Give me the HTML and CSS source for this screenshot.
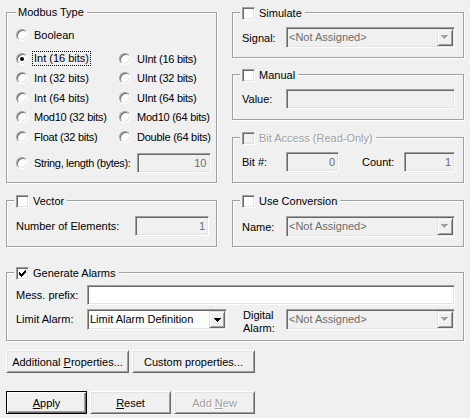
FILE: index.html
```html
<!DOCTYPE html>
<html>
<head>
<meta charset="utf-8">
<link rel="stylesheet" href="styles.css">
</head>
<body>
<div class="dlg">
  <div class="top">
    <div class="group modbus">
      <div class="legend"><span>Modbus Type</span></div>
      <div class="opts">
        <label class="opt h20 first"><span class="radio"></span><span>Boolean</span></label>
        <div class="pair h19">
          <label class="opt"><span class="radio on"></span><span class="focus">Int (16 bits)</span></label>
          <label class="opt"><span class="radio"></span><span class="nar">UInt (16 bits)</span></label>
        </div>
        <div class="pair h20">
          <label class="opt"><span class="radio"></span><span>Int (32 bits)</span></label>
          <label class="opt"><span class="radio"></span><span class="nar">UInt (32 bits)</span></label>
        </div>
        <div class="pair h19">
          <label class="opt"><span class="radio"></span><span>Int (64 bits)</span></label>
          <label class="opt"><span class="radio"></span><span class="nar">UInt (64 bits)</span></label>
        </div>
        <div class="pair h20">
          <label class="opt"><span class="radio"></span><span class="nar">Mod10 (32 bits)</span></label>
          <label class="opt"><span class="radio"></span><span class="nar">Mod10 (64 bits)</span></label>
        </div>
        <div class="pair h20">
          <label class="opt"><span class="radio"></span><span class="nar">Float (32 bits)</span></label>
          <label class="opt"><span class="radio"></span><span class="nar">Double (64 bits)</span></label>
        </div>
        <div class="opt h20 strrow"><span class="radio"></span><span class="tight">String, length (bytes):</span><span class="edit num w74">10</span></div>
      </div>
    </div>
    <div class="rightcol">
      <div class="group rgroup">
        <div class="legend cb"><span class="check"></span><span>Simulate</span></div>
        <div class="frow"><span class="lbl">Signal:</span><span class="combo"><span class="val">&lt;Not Assigned&gt;</span><span class="cbtn"><svg width="8" height="5" viewBox="0 0 8 5" shape-rendering="crispEdges"><path fill="#fff" d="M1 1H8V2H7V3H6V4H5V5H4V4H3V3H2V2H1Z"/><path fill="#a0a0a0" d="M0 0H7V1H6V2H5V3H4V4H3V3H2V2H1V1H0Z"/></svg></span></span></div>
      </div>
      <div class="group rgroup manual">
        <div class="legend cb"><span class="check"></span><span>Manual</span></div>
        <div class="frow"><span class="lbl">Value:</span><span class="edit grow"></span></div>
      </div>
      <div class="group rgroup bit">
        <div class="legend cb disabled"><span class="check"></span><span>Bit Access (Read-Only)</span></div>
        <div class="frow"><span class="lbl">Bit #:</span><span class="edit num w53">0</span><span class="lbl count">Count:</span><span class="edit num grow">1</span></div>
      </div>
    </div>
  </div>

  <div class="mid">
    <div class="group vector">
      <div class="legend cb"><span class="check"></span><span>Vector</span></div>
      <div class="frow"><span>Number of Elements:</span><span class="edit num w74 push">1</span></div>
    </div>
    <div class="group conv">
      <div class="legend cb"><span class="check"></span><span>Use Conversion</span></div>
      <div class="frow"><span class="lbl">Name:</span><span class="combo"><span class="val">&lt;Not Assigned&gt;</span><span class="cbtn"><svg width="8" height="5" viewBox="0 0 8 5" shape-rendering="crispEdges"><path fill="#fff" d="M1 1H8V2H7V3H6V4H5V5H4V4H3V3H2V2H1Z"/><path fill="#a0a0a0" d="M0 0H7V1H6V2H5V3H4V4H3V3H2V2H1V1H0Z"/></svg></span></span></div>
    </div>
  </div>

  <div class="group gen">
    <div class="legend cb"><span class="check"><svg width="9" height="9" viewBox="-1 -1 9 9" shape-rendering="crispEdges"><path fill="#000" d="M0 2H1V3H2V4H3V3H4V2H5V1H6V0H7V3H6V4H5V5H4V6H3V7H2V6H1V5H0Z"/></svg></span><span>Generate Alarms</span></div>
    <div class="frow"><span class="lbl w71">Mess. prefix:</span><span class="edit en grow"></span></div>
    <div class="frow top2">
      <span class="lbl w71 lh21">Limit Alarm:</span>
      <span class="combo en w140"><span class="val">Limit Alarm Definition</span><span class="cbtn"><svg width="7" height="4" viewBox="0 0 7 4" shape-rendering="crispEdges"><path fill="#000" d="M0 0H7V1H6V2H5V3H4V4H3V3H2V2H1V1H0Z"/></svg></span></span>
      <span class="lbl digital">Digital<br>Alarm:</span>
      <span class="combo"><span class="val">&lt;Not Assigned&gt;</span><span class="cbtn"><svg width="8" height="5" viewBox="0 0 8 5" shape-rendering="crispEdges"><path fill="#fff" d="M1 1H8V2H7V3H6V4H5V5H4V4H3V3H2V2H1Z"/><path fill="#a0a0a0" d="M0 0H7V1H6V2H5V3H4V4H3V3H2V2H1V1H0Z"/></svg></span></span>
    </div>
  </div>

  <div class="btns b1">
    <span class="pb w123"><span>Additional <u>P</u>roperties...</span></span>
    <span class="pb w123"><span>Custom properties...</span></span>
  </div>
  <div class="btns b2">
    <span class="pb def w81"><span><u>A</u>pply</span></span>
    <span class="pb w81"><span><u>R</u>eset</span></span>
    <span class="pb dis w81"><span>Add <u>N</u>ew</span></span>
  </div>
</div>
</body>
</html>
```

FILE: styles.css
```css
* { box-sizing: border-box; }
html, body { margin: 0; padding: 0; }
body {
  background: #f0f0f0;
  font-family: "Liberation Sans", Arial, sans-serif;
  font-size: 11px;
  color: #000;
  width: 470px;
  height: 418px;
  overflow: hidden;
}
.dlg { padding: 12px 0 0 6px; }

/* group boxes (etched frame) */
.group {
  position: relative;
  border: 1px solid #a0a0a0;
  box-shadow: inset 1px 1px #fff, 1px 1px #fff;
}
.legend {
  position: absolute;
  left: 9px;
  top: -7px;
  height: 13px;
  line-height: 13px;
  padding: 0 3px 0 2px;
  background: #f0f0f0;
  display: flex;
  align-items: center;
  gap: 4px;
  white-space: nowrap;
}
.legend.cb { left: 7px; top: -6px; }
.legend.disabled { color: #a0a0a0; text-shadow: 1px 1px #fff; }
.legend.disabled .check { background: #f0f0f0; }

.top { display: flex; gap: 15px; align-items: flex-start; }
.modbus { width: 211px; height: 171px; padding: 12px 7px 0 9px; }
.rightcol { width: 232px; display: flex; flex-direction: column; }
.rgroup { width: 232px; height: 46px; padding: 14px 8px 0 9px; }
.manual { margin-top: 16px; }
.bit { margin-top: 17px; }

/* radio options */
.opts { display: flex; flex-direction: column; }
.pair { display: grid; grid-template-columns: 103px 1fr; }
.pair .opt { height: 100%; }
.opt { display: flex; align-items: center; gap: 6px; white-space: nowrap; }
.h19 { height: 19px; }
.h20 { height: 20px; }
.first { margin-bottom: 4px; }
.strrow { margin-top: 6px; }
.strrow .edit { margin-left: auto; }
.tight { letter-spacing: -0.35px; }
.nar { letter-spacing: -0.25px; }
.focus {
  border: 1px dotted #000;
  line-height: 13px;
  padding: 0 1px;
  margin-left: -2px;
}

.radio {
  position: relative;
  width: 12px;
  height: 12px;
  flex: none;
  border-radius: 50%;
  border: 1px solid;
  border-color: #a0a0a0 #fff #fff #a0a0a0;
  box-shadow: inset 1px 1px #696969, inset -1px -1px #e3e3e3;
  background: #fff;
}
.radio.on::after {
  content: "";
  position: absolute;
  left: 3px;
  top: 3px;
  width: 4px;
  height: 4px;
  border-radius: 50%;
  background: #000;
}

.check {
  width: 13px;
  height: 13px;
  flex: none;
  padding: 1px;
  border: 1px solid;
  border-color: #a0a0a0 #fff #fff #a0a0a0;
  box-shadow: inset 1px 1px #696969, inset -1px -1px #e3e3e3;
  background: #fff;
  display: flex;
}
.check svg { display: block; }

/* field rows */
.frow { display: flex; align-items: center; white-space: nowrap; }
.lbl { width: 44px; flex: none; }
.count { margin-left: 23px; width: 42px; }
.w71 { width: 71px; }
.w53 { width: 53px; flex: none; }
.w74 { width: 74px; flex: none; }
.w140 { width: 140px; flex: none !important; }
.grow { flex: 1; }
.push { margin-left: auto; }

.edit {
  height: 20px;
  border: 1px solid;
  border-color: #a0a0a0 #fff #fff #a0a0a0;
  box-shadow: inset 1px 1px #696969, inset -1px -1px #e3e3e3;
  background: #f0f0f0;
  color: #6d6d6d;
  padding: 0 3px 0 3px;
  line-height: 18px;
}
.edit.en { background: #fff; color: #000; }
.num { text-align: right; }

.combo {
  flex: 1;
  display: flex;
  height: 21px;
  padding: 1px;
  border: 1px solid;
  border-color: #a0a0a0 #fff #fff #a0a0a0;
  box-shadow: inset 1px 1px #696969, inset -1px -1px #e3e3e3;
  background: #f0f0f0;
}
.combo .val {
  flex: 1;
  padding-left: 1px;
  line-height: 17px;
  color: #6d6d6d;
  overflow: hidden;
}
.combo.en { background: #fff; }
.combo.en .val { color: #000; }
.cbtn {
  width: 16px;
  flex: none;
  border: 1px solid;
  border-color: #e3e3e3 #696969 #696969 #e3e3e3;
  box-shadow: inset 1px 1px #fff, inset -1px -1px #a0a0a0;
  background: #f0f0f0;
  display: flex;
  align-items: center;
  justify-content: center;
}
.cbtn svg { display: block; }

/* middle row */
.mid { display: flex; gap: 15px; margin-top: 17px; }
.vector { width: 211px; height: 47px; padding: 15px 7px 0 9px; }
.conv { width: 232px; height: 47px; padding: 15px 8px 0 9px; }

/* alarms */
.gen { width: 458px; height: 69px; margin-top: 25px; padding: 12px 8px 0 9px; }
.gen .frow.top2 { margin-top: 4px; align-items: flex-start; }
.lh21 { line-height: 21px; }
.digital { margin-left: 16px; width: 43px; line-height: 13px; }

/* buttons */
.btns { display: flex; gap: 3px; }
.b1 { margin-top: 9px; }
.b2 { margin-top: 18px; }
.w123 { width: 123px; }
.w81 { width: 81px; }
.pb {
  height: 23px;
  border: 1px solid;
  border-color: #fff #696969 #696969 #fff;
  box-shadow: inset 1px 1px #e3e3e3, inset -1px -1px #a0a0a0;
  background: #f0f0f0;
  display: flex;
  align-items: center;
  justify-content: center;
  white-space: nowrap;
}
.pb.def {
  border-color: #000;
  box-shadow: inset 1px 1px #fff, inset -1px -1px #696969, inset -2px -2px #a0a0a0;
}
.pb.dis { color: #a0a0a0; text-shadow: 1px 1px #fff; }
```
